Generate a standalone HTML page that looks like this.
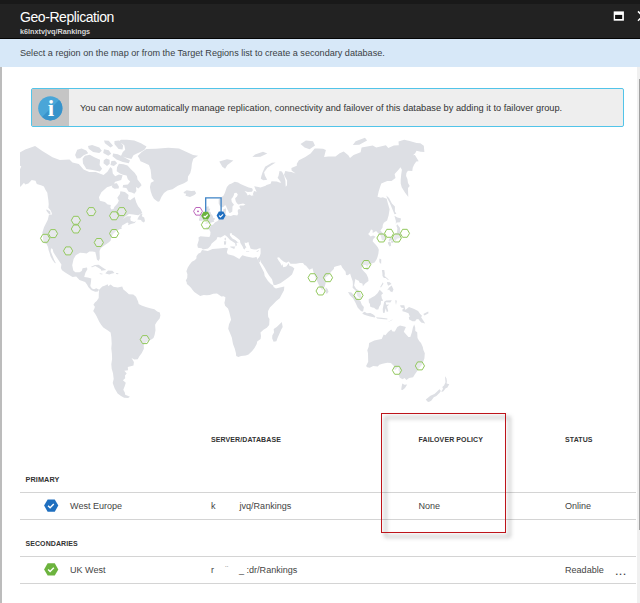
<!DOCTYPE html>
<html><head><meta charset="utf-8"><title>Geo-Replication</title>
<style>
html,body{margin:0;padding:0;}
body{width:640px;height:603px;position:relative;overflow:hidden;background:#fff;font-family:"Liberation Sans",sans-serif;color:#333;}
.abs{position:absolute;}
#topstrip{left:0;top:0;width:640px;height:4px;background:#191919;}
#hdr{left:0;top:4px;width:640px;height:35px;background:#222;}
#hdrline{left:0;top:38px;width:640px;height:1.2px;background:#050505;}
#title{left:20px;top:9.2px;font-size:14px;letter-spacing:-0.43px;color:#fff;white-space:nowrap;line-height:17px;}
#sub{left:20px;top:26.8px;font-size:7.25px;font-weight:bold;color:#d8d8d8;white-space:nowrap;line-height:10px;}
#band{left:0;top:39px;width:640px;height:28px;background:#d7e8f8;}
#bandtxt{left:20px;top:47px;font-size:9.1px;color:#3a3f45;white-space:nowrap;line-height:12px;}
#lborder{left:0;top:67px;width:1.6px;height:536px;background:#bcbcbc;}
#rborder{left:636.5px;top:67px;width:3.5px;height:536px;background:#f0f0f0;}
#thumb{left:638.7px;top:79px;width:1.3px;height:451px;background:#a0a0a0;}
#info{left:31px;top:88.2px;width:591px;height:36.6px;border:1.5px solid #52c4e9;border-radius:2px;background:#eeeeee;}
#infoicon{left:0;top:0;width:37.2px;height:36.6px;background:#c5c5c5;}
#infotxt{left:80px;top:102px;font-size:9.24px;color:#333;white-space:nowrap;line-height:12px;}
.th{font-size:7px;font-weight:bold;color:#333;white-space:nowrap;line-height:9px;letter-spacing:0.1px;}
.td{font-size:9.05px;color:#444;white-space:nowrap;line-height:12px;}
.hl{height:1px;background:#d4d4d4;left:20px;width:615.5px;}
#redbox{left:380.9px;top:413.4px;width:122.7px;height:117.5px;border:1.8px solid #be141a;filter:drop-shadow(4px 4px 2.2px rgba(0,0,0,0.55));}
</style></head><body>
<div class="abs" id="topstrip"></div>
<div class="abs" id="hdr"></div>
<div class="abs" id="hdrline"></div>
<svg class="abs" style="left:610px;top:8px;" width="30" height="16" viewBox="610 8 30 16"><rect x="613.7" y="11.4" width="10.2" height="9.3" fill="#fff"/><rect x="615.1" y="14.9" width="7.1" height="4.1" fill="#111"/><path d="M638,11.4 L642.7,16.1 L638,20.8" fill="none" stroke="#fff" stroke-width="1.5"/></svg>
<div class="abs" id="title">Geo-Replication</div>
<div class="abs" id="sub">k6lnxtvjvq/Rankings</div>
<div class="abs" id="band"></div>
<div class="abs" id="bandtxt">Select a region on the map or from the Target Regions list to create a secondary database.</div>
<div class="abs" id="lborder"></div>
<div class="abs" id="rborder"></div><div class="abs" id="thumb"></div>
<div class="abs" id="info"><div class="abs" id="infoicon"></div></div>
<svg class="abs" style="left:37px;top:95px;" width="27" height="27" viewBox="0 0 27 27"><defs><clipPath id="cc"><circle cx="13.3" cy="13.3" r="12.1"/></clipPath></defs><circle cx="13.3" cy="13.3" r="12.1" fill="#4aa6d8"/><path d="M27,0 L27,27 L0,27 Z" fill="#3893cb" clip-path="url(#cc)"/><text x="14" y="20.6" text-anchor="middle" font-family="Liberation Serif,serif" font-weight="bold" font-size="23" fill="#fff">i</text></svg>
<div class="abs" id="infotxt">You can now automatically manage replication, connectivity and failover of this database by adding it to failover group.</div>
<!--MAP--><svg class="abs" id="map" style="left:20px;top:130px;" width="450" height="290" viewBox="20 130 450 290"><path fill="#dddfe4" d="M14.3,160.4 20.2,152.3 25.2,149.4 35.1,145.9 42.3,151.1 52.5,157.2 59.8,160.1 69.5,159.5 72.5,162.6 78.8,164.1 83.6,169.4 89.2,172.0 95.7,172.1 103.6,174.9 107.4,171.7 110.4,166.9 112.2,168.8 112.8,173.6 115.2,176.3 118.9,174.5 122.6,175.3 121.2,180.0 115.2,181.8 112.4,185.6 107.0,187.2 101.4,192.3 98.9,197.2 99.9,200.8 104.9,202.1 107.7,204.4 110.8,204.9 110.4,207.8 111.5,209.4 113.5,209.1 114.3,206.9 117.5,203.4 118.8,200.7 117.3,197.8 119.9,194.1 120.4,191.3 124.9,192.0 128.6,195.0 128.0,198.8 130.1,200.3 133.9,197.6 134.6,197.1 136.3,202.5 138.1,206.3 140.6,209.3 142.3,213.0 138.1,215.2 133.2,214.5 128.9,214.0 125.4,216.6 122.5,219.4 126.8,216.2 131.2,216.2 130.3,218.6 130.7,220.8 134.2,221.9 136.2,221.1 134.7,222.9 130.9,223.9 128.1,225.2 128.5,223.0 127.2,222.6 124.3,224.3 122.1,225.6 121.3,228.0 122.1,228.6 119.1,229.6 116.0,231.1 113.0,234.0 111.3,237.4 110.6,240.7 108.3,242.7 104.6,245.2 100.9,247.9 99.5,250.9 99.7,255.6 99.8,258.5 98.6,261.0 96.9,259.5 96.2,255.7 95.3,252.0 92.4,251.5 89.4,251.5 86.6,253.6 83.7,253.1 80.0,252.8 75.8,255.3 73.6,259.1 72.2,265.2 73.3,270.5 75.3,272.3 79.6,272.3 81.7,270.9 82.6,268.3 86.9,267.6 87.4,269.3 85.4,272.7 84.2,277.0 87.8,277.4 91.3,278.6 90.8,283.1 90.3,285.9 91.9,288.4 94.0,289.3 96.3,288.3 99.1,289.7 97.8,291.5 95.3,291.8 93.2,290.9 91.0,290.0 88.3,287.1 87.0,284.6 85.1,282.0 82.3,281.1 79.5,280.1 76.2,276.6 72.6,276.9 69.2,275.0 65.2,272.6 62.0,270.2 60.9,268.1 61.4,264.6 59.1,261.1 56.8,257.5 55.1,254.9 53.4,252.3 52.6,249.1 51.0,248.3 50.7,251.3 52.5,255.7 54.2,260.0 55.9,263.2 54.8,263.0 52.5,260.0 50.5,256.2 49.6,253.0 48.7,250.4 47.9,246.8 46.6,244.1 43.8,242.9 43.0,238.7 43.0,236.8 42.4,232.4 44.0,227.3 47.8,219.7 48.9,214.9 51.4,215.0 51.9,213.2 50.7,210.4 48.4,207.8 48.7,204.2 48.4,200.5 47.9,197.2 47.3,192.7 45.3,189.6 43.9,186.6 41.7,185.4 36.8,183.9 35.5,180.7 31.7,179.9 28.4,183.6 25.2,184.4 24.0,182.7 20.7,186.4 16.0,188.9 10.8,190.9 6.1,191.9 9.3,189.7 15.0,186.7 18.0,183.5 14.9,182.8 12.7,181.7 13.7,178.3 11.7,175.3 11.9,172.1 15.3,169.0 20.3,168.7 21.3,166.3 19.0,165.3 15.5,164.0ZM46.5,209.2 50.2,211.5 50.6,215.1 48.9,214.0 46.4,210.8ZM137.3,219.4 138.5,216.9 140.6,214.0 142.5,213.8 141.8,216.2 144.2,217.5 145.0,221.1 143.9,222.4 141.6,221.2 141.1,220.1ZM118.9,163.7 123.4,164.2 127.5,165.6 130.7,169.0 134.6,172.7 137.0,176.3 137.5,179.4 140.5,183.3 141.6,185.3 138.4,188.4 136.0,186.9 136.4,191.1 134.4,193.8 131.8,192.5 128.6,191.7 126.4,188.1 122.6,187.5 123.1,184.9 127.9,184.6 130.2,181.6 127.8,179.3 126.6,175.4 122.9,174.7 120.0,173.5 116.7,171.3 117.0,167.3ZM82.6,158.7 83.0,163.6 86.4,168.9 92.7,169.9 99.9,171.4 102.1,168.8 99.6,165.1 100.1,159.7 94.3,157.2 89.8,154.8 84.9,155.7ZM75.1,155.0 76.7,158.4 80.1,158.3 83.7,155.3 88.2,153.3 86.3,150.4 81.6,148.4 77.2,149.8ZM88.7,148.8 93.1,151.9 99.3,153.0 101.8,150.7 99.3,147.5 92.1,144.9 88.0,145.9ZM103.5,163.3 107.0,165.9 109.7,163.7 109.6,159.8 106.2,158.6 103.8,160.3ZM110.5,164.9 113.9,165.9 117.2,163.2 115.0,160.7 111.4,161.0ZM112.5,156.3 116.5,159.5 122.9,162.1 128.8,163.2 130.0,160.5 124.1,157.3 117.8,154.3 113.1,153.5ZM103.2,152.9 108.3,155.7 111.2,153.7 108.8,150.3 104.0,149.3ZM121.0,156.0 126.3,157.7 131.4,158.9 133.5,155.3 136.9,153.5 140.9,151.8 144.7,149.5 146.5,146.5 141.0,143.2 134.3,140.6 127.0,139.7 121.0,139.8 118.9,141.2 124.3,145.2 125.2,149.8 122.8,151.9ZM114.4,144.0 118.6,149.1 122.5,149.4 123.2,145.4 118.9,140.5 114.5,140.9ZM104.9,143.3 110.5,147.5 113.1,145.7 108.7,140.7 104.0,140.6ZM113.4,183.4 116.9,183.3 118.9,186.6 118.7,188.5 114.5,188.8 111.7,187.1ZM137.7,155.9 141.7,152.0 146.3,149.0 155.8,148.7 168.3,147.8 179.0,148.5 187.7,152.5 193.1,154.9 198.1,155.8 193.3,158.8 191.9,163.6 191.4,168.4 190.3,173.1 188.0,176.4 187.7,181.0 184.0,183.2 177.8,185.8 172.5,189.3 167.4,190.6 164.0,192.9 161.5,196.8 159.5,201.2 158.2,201.8 157.1,201.2 153.9,198.8 152.1,195.6 150.7,191.3 149.9,187.0 150.9,182.7 154.1,180.9 151.4,178.2 151.2,174.7 150.6,169.7 148.9,164.9 144.6,163.0 140.5,161.3 139.2,158.3ZM99.1,289.7 102.3,286.4 104.6,285.8 107.7,284.2 108.2,286.2 110.6,284.5 113.4,286.7 117.7,287.5 122.2,286.6 123.4,289.4 126.2,291.8 128.9,294.3 133.3,294.6 136.0,296.7 138.1,301.5 138.7,303.9 141.6,305.4 145.8,307.0 150.1,308.3 154.4,309.3 157.2,311.6 159.8,312.4 160.4,315.5 159.6,318.6 156.9,321.7 155.1,324.8 155.5,330.2 154.6,334.9 153.5,338.1 150.9,339.8 146.9,341.4 143.7,344.7 143.9,348.7 141.8,352.9 139.4,356.2 137.7,359.2 134.3,359.6 131.5,358.1 133.9,362.0 133.5,365.4 127.8,367.0 128.0,370.3 124.3,370.8 126.7,373.6 125.0,375.4 125.2,378.2 122.9,380.2 125.8,382.8 124.5,386.8 123.3,389.8 124.8,392.5 125.2,394.7 130.0,396.7 128.1,398.1 124.1,397.8 121.0,396.1 117.6,393.4 114.7,388.6 112.7,382.9 113.7,379.0 113.0,373.3 111.7,368.8 111.3,364.3 112.1,358.9 111.9,353.7 111.3,348.5 111.7,343.5 111.3,336.9 110.6,332.5 107.9,330.4 103.3,327.6 101.1,324.7 99.1,321.5 96.6,316.3 95.0,313.4 93.2,311.0 94.5,308.3 94.9,306.8 93.4,304.7 94.9,302.4 96.7,300.9 98.7,297.9 98.8,294.0ZM202.0,249.9 207.8,251.0 212.5,249.0 218.7,248.5 225.7,247.7 228.0,248.2 226.8,252.3 227.8,254.2 233.7,255.8 239.3,258.9 240.8,257.1 242.4,255.2 246.4,256.4 252.8,257.8 256.6,257.1 257.3,259.1 258.8,262.1 261.8,268.1 264.1,272.6 264.7,276.1 268.0,280.9 270.9,283.9 273.3,285.4 273.5,286.9 275.9,288.5 280.0,287.5 284.3,286.5 284.0,290.2 281.7,294.6 279.7,298.3 276.3,301.1 272.7,304.7 269.9,307.5 268.1,311.1 268.0,314.0 268.2,316.9 269.5,319.1 269.2,325.0 266.8,327.8 263.5,329.7 260.5,332.6 261.0,336.0 260.6,339.1 257.2,341.5 256.7,343.9 254.5,348.0 252.2,351.0 248.5,354.4 245.8,355.6 241.1,355.9 238.3,357.0 236.2,355.9 235.9,353.0 234.8,348.8 233.0,343.9 231.8,337.4 229.9,332.7 228.2,328.8 229.0,324.2 231.1,319.7 230.2,316.0 229.1,311.5 228.0,308.6 225.1,305.7 224.4,302.8 225.1,299.9 225.4,297.3 223.6,296.3 221.4,296.5 219.2,295.0 217.0,293.6 213.3,293.8 209.7,295.0 206.7,295.2 203.8,295.0 200.2,296.0 197.2,293.9 194.3,292.1 192.2,289.6 191.2,287.9 189.3,286.1 186.9,283.9 186.7,282.3 185.8,280.5 187.2,277.9 187.4,274.2 186.4,271.2 187.8,267.6 189.5,264.8 191.9,261.7 194.7,260.3 196.4,258.6 196.5,256.3 198.2,253.7 200.7,252.4ZM281.8,321.9 282.7,327.0 281.4,329.2 279.5,333.6 277.5,338.1 276.4,341.2 273.6,341.8 272.2,338.6 272.3,335.6 274.0,332.6 273.7,328.9 276.7,327.1 279.8,324.0ZM197.3,244.9 197.9,247.7 201.6,248.3 202.9,249.5 208.0,248.4 210.4,245.9 211.7,243.4 216.5,239.6 217.5,236.9 220.7,237.5 224.9,235.1 227.1,236.8 230.1,240.1 232.9,241.8 235.1,243.3 235.6,245.9 235.2,246.7 237.1,245.1 236.3,243.8 237.2,242.6 239.0,243.2 235.3,239.9 232.4,238.5 230.0,235.5 229.8,233.4 231.7,232.9 231.9,234.4 233.9,235.6 237.2,237.9 239.9,240.2 240.4,242.9 242.6,246.5 243.6,249.0 244.7,249.5 245.5,247.8 246.5,247.5 245.1,245.3 244.6,242.6 246.1,243.1 248.4,242.0 248.8,243.2 248.9,244.3 249.7,246.0 250.5,248.5 251.7,248.9 254.2,249.4 256.6,249.5 258.2,248.7 260.5,248.0 260.6,251.0 260.6,253.4 259.9,255.8 259.3,257.0 257.5,259.1 258.9,262.1 259.7,262.5 260.4,259.7 260.7,262.0 262.9,265.0 265.2,268.8 266.8,271.8 269.1,275.6 272.0,279.3 273.4,284.2 273.7,285.1 275.8,285.0 280.4,283.2 285.0,280.0 288.8,277.3 292.0,274.6 293.0,271.9 294.4,268.4 292.3,266.7 289.4,265.8 288.8,262.9 287.6,264.7 286.2,266.6 283.2,267.2 282.5,264.0 281.7,265.7 280.4,263.0 278.4,260.2 277.1,257.8 279.0,257.3 281.0,259.5 283.5,261.4 286.3,262.7 288.8,261.6 290.5,263.7 295.9,263.7 299.9,262.9 303.0,263.0 304.5,264.9 306.1,265.8 307.0,266.9 309.4,269.7 312.5,268.3 313.6,272.5 315.3,277.6 317.7,282.6 320.2,287.5 322.2,290.5 323.2,288.9 324.7,286.6 325.5,283.7 325.8,281.1 325.3,277.7 328.2,275.5 331.1,271.8 333.8,269.1 334.2,266.9 336.3,266.2 339.2,265.6 341.0,265.0 342.2,267.6 345.6,271.8 346.0,275.1 347.8,275.3 350.1,273.6 351.2,277.1 352.7,281.2 352.9,284.8 352.6,287.8 355.8,290.7 357.3,296.1 360.6,298.9 361.7,297.0 360.6,293.5 358.7,290.6 356.1,288.8 354.1,285.5 355.0,281.0 355.5,278.7 356.4,279.8 358.7,280.8 359.6,282.8 362.4,283.4 362.9,286.2 365.2,283.5 368.5,280.9 368.2,278.1 366.4,274.0 363.3,270.8 361.5,268.4 362.3,266.4 363.8,265.0 365.8,265.0 367.4,267.0 367.9,265.1 370.9,263.8 374.6,262.4 376.5,259.6 377.5,257.1 378.4,253.4 378.8,249.7 377.9,247.6 376.2,245.3 372.6,241.2 373.3,238.9 375.6,236.7 373.1,235.6 370.7,236.6 368.1,233.9 369.4,232.8 371.0,229.6 372.6,230.0 372.7,233.0 376.1,231.0 378.4,233.4 380.6,235.2 381.9,240.0 383.9,240.7 385.7,239.1 385.0,235.6 382.2,232.5 380.4,230.5 382.5,227.7 382.8,224.9 383.8,222.8 387.1,220.5 388.6,215.5 389.6,209.3 387.9,203.5 386.7,198.7 382.8,197.2 380.9,197.7 377.5,196.8 378.6,191.8 379.9,187.4 381.3,183.4 387.2,180.9 391.5,180.9 395.5,178.1 394.6,173.9 398.1,170.3 400.5,167.2 401.9,169.8 401.2,174.6 400.7,179.7 400.7,183.4 401.7,187.2 405.1,192.8 408.3,197.1 408.1,192.4 408.0,187.9 409.7,186.0 408.0,182.9 407.4,178.9 406.1,175.9 406.4,172.9 407.9,170.8 412.3,170.9 412.7,167.7 414.2,164.6 416.3,161.5 418.7,161.3 414.9,155.1 413.0,155.2 415.2,153.2 416.5,150.8 420.6,151.7 424.4,152.0 423.8,145.7 420.3,143.2 416.6,143.0 409.6,140.9 404.2,139.8 398.5,141.4 398.8,145.2 393.8,145.5 388.3,148.0 385.9,145.2 376.2,147.6 372.7,145.4 361.6,147.6 360.6,152.2 353.6,154.9 350.0,157.9 348.3,155.2 343.7,151.5 339.7,153.3 335.5,156.5 328.4,156.6 324.1,157.1 325.9,150.0 323.0,148.7 318.0,148.5 314.7,148.4 310.6,153.6 305.3,156.9 298.9,160.2 296.8,163.7 296.8,165.7 291.4,167.9 291.6,170.5 295.6,173.6 291.4,171.9 289.0,171.7 285.3,171.1 284.0,174.8 287.1,180.5 287.0,185.3 285.7,186.7 285.4,180.8 284.2,176.0 281.9,171.4 279.5,171.1 278.5,175.9 277.6,177.8 281.3,182.7 279.4,182.4 276.8,181.6 271.5,181.3 270.6,183.8 266.5,185.1 265.6,185.7 260.5,187.4 257.0,186.7 254.2,186.3 256.1,190.7 256.7,191.8 254.0,191.1 252.8,194.2 253.7,195.2 251.2,195.7 249.7,194.4 247.6,195.5 246.8,193.4 244.5,191.0 247.9,191.9 252.0,191.7 252.9,189.9 252.1,188.2 248.7,187.6 243.9,185.5 240.5,184.1 238.1,182.4 234.8,181.8 231.6,183.5 229.1,184.6 226.9,187.0 226.0,189.4 224.8,192.9 223.4,195.7 221.6,197.0 218.7,199.5 218.7,203.4 219.8,205.8 221.6,207.4 223.3,206.9 225.2,205.0 226.2,206.6 227.6,209.7 228.7,211.8 229.1,213.0 230.6,212.7 232.3,211.4 232.4,209.0 232.5,206.6 234.0,204.7 231.8,202.1 231.3,199.1 232.8,197.2 233.8,195.3 234.4,193.0 236.5,192.8 237.8,194.5 237.0,196.4 235.1,198.3 235.7,201.3 236.9,203.3 238.3,204.6 240.6,203.9 243.1,203.6 245.5,204.6 243.6,205.4 240.0,205.5 239.3,206.8 240.8,209.5 238.8,209.0 237.6,210.7 238.2,213.7 237.2,215.5 235.8,215.2 233.4,215.1 230.9,216.0 228.2,215.5 227.0,215.8 225.7,214.8 225.7,213.7 226.0,210.6 225.7,208.2 223.2,209.5 223.3,212.6 224.2,215.8 222.1,216.8 219.5,217.2 218.5,219.9 217.3,221.3 215.1,222.2 212.9,224.8 210.8,224.9 210.3,226.7 205.9,227.1 206.4,228.5 209.1,229.6 210.5,232.0 210.3,234.8 209.4,236.9 206.0,236.7 200.4,236.2 198.5,237.4 198.8,240.1ZM204.8,223.9 207.9,223.5 211.4,222.6 214.7,221.6 213.5,221.0 215.2,218.5 213.3,217.9 212.7,215.8 211.0,213.8 210.4,211.8 209.0,211.8 210.3,208.7 208.4,208.4 209.0,206.5 206.5,206.6 205.2,208.9 205.7,211.9 206.6,213.9 208.7,214.1 208.9,216.3 206.9,217.4 207.2,219.4 205.7,220.5 208.0,221.0 208.7,221.4 206.6,222.1ZM199.2,220.7 201.9,220.7 204.4,219.5 204.9,217.0 205.6,215.0 204.4,213.6 202.0,213.6 199.6,215.6 199.7,217.5 198.9,219.5ZM183.6,192.2 186.6,190.3 191.2,191.0 194.7,190.8 196.2,193.2 194.4,195.1 190.0,196.9 185.4,195.7 186.2,193.8 183.9,193.3ZM219.3,161.5 222.3,166.7 225.1,168.8 227.4,164.9 233.4,160.4 227.0,159.3 222.7,160.5ZM260.8,178.8 263.4,180.3 267.2,179.8 265.0,175.8 264.1,172.2 267.5,167.7 273.3,163.9 275.7,162.5 271.9,162.8 265.1,166.8 262.5,172.4 261.3,176.3ZM304.6,147.6 309.6,149.2 315.0,145.6 313.0,141.2 305.9,140.5 300.5,144.1ZM352.8,145.0 359.3,144.8 367.1,140.6 365.0,137.7 355.6,141.2ZM252.3,156.9 260.4,156.8 267.3,153.6 263.0,151.7 255.0,154.5ZM386.3,195.5 389.0,198.1 391.9,203.6 394.9,206.5 394.9,211.6 396.4,213.7 394.5,214.2 392.6,209.7 389.8,202.9 387.3,198.5ZM395.8,224.4 395.9,221.0 394.4,215.7 397.4,217.6 401.1,218.6 400.1,222.3 396.5,222.5ZM397.2,224.3 400.1,227.9 399.9,231.2 401.3,235.2 400.6,237.4 398.8,238.3 396.8,238.8 395.4,241.3 394.0,239.2 390.9,240.5 388.9,241.1 388.6,240.2 390.0,238.0 394.1,237.2 395.0,233.6 396.9,232.8 397.4,228.5 396.4,225.8ZM387.9,242.2 389.8,241.6 390.9,242.8 391.1,245.8 389.6,246.5 388.0,243.8ZM391.0,241.1 393.6,240.1 393.9,241.9 392.4,243.1 391.2,242.4ZM379.7,258.4 381.3,259.6 381.1,264.0 379.4,262.3 379.3,259.7ZM365.7,267.5 368.4,267.4 368.1,270.2 365.8,269.4ZM325.7,287.3 327.7,289.3 328.5,291.7 327.3,293.4 325.9,293.5 325.4,290.3ZM348.0,292.1 351.4,292.6 356.0,297.0 360.5,301.3 361.8,304.7 363.9,306.9 363.1,311.4 361.2,311.3 357.8,307.8 355.6,303.0 353.2,298.4 349.9,295.2ZM362.2,313.2 364.6,311.8 366.9,313.3 370.3,313.1 372.9,314.3 375.3,316.2 374.8,317.6 370.1,316.6 365.9,315.3 363.8,314.4ZM368.8,298.9 370.2,298.6 372.2,297.3 374.6,296.0 377.5,293.2 379.7,289.8 381.7,291.7 383.1,293.2 381.3,294.9 381.8,298.3 383.2,300.8 381.0,301.0 380.8,304.2 379.2,306.8 378.3,309.5 376.1,309.4 374.0,307.8 372.2,307.6 370.1,306.5 370.0,303.9 368.9,302.4 368.7,300.6ZM382.7,309.0 384.2,301.8 386.1,300.4 391.8,300.3 390.3,302.6 385.7,302.2 386.3,304.7 389.2,304.5 387.0,306.6 388.3,311.3 386.8,312.1 385.7,308.3 384.5,313.0 383.0,312.7ZM400.2,305.2 404.3,305.3 405.4,310.0 409.0,307.0 413.6,308.7 418.1,310.9 420.0,313.7 422.2,315.9 421.0,316.9 425.2,323.5 421.2,322.6 418.2,318.9 416.1,319.6 415.2,321.3 412.5,321.2 409.2,319.6 408.8,317.1 409.9,316.8 408.5,313.3 405.2,312.1 402.5,311.3 402.4,309.4 404.2,308.1 401.5,307.8 400.2,306.1ZM381.9,270.0 384.3,269.9 384.8,273.4 384.6,276.0 388.7,279.5 388.1,280.0 385.7,278.1 383.9,278.0 382.5,275.9 382.4,273.4ZM387.2,290.2 389.1,287.5 391.6,285.5 393.5,289.5 392.3,292.2 390.1,291.2 389.2,289.4ZM387.0,282.1 389.8,282.2 391.5,284.0 389.5,284.9 388.2,285.7 387.3,283.9ZM380.2,287.1 382.9,282.3 383.4,283.8 381.0,287.5ZM375.9,317.2 381.7,317.8 387.4,318.4 387.3,319.5 381.5,319.1 377.2,318.5ZM387.6,322.2 393.1,319.1 391.4,320.6ZM395.4,300.1 396.8,300.7 396.0,305.0 395.5,302.5ZM423.3,313.9 428.2,311.5 428.5,313.2 424.5,315.4ZM369.1,342.9 370.2,342.6 374.3,340.4 377.8,339.8 381.7,339.1 383.7,334.5 385.4,335.2 388.1,332.0 391.2,329.5 392.6,331.4 394.8,331.4 397.3,326.9 400.0,325.4 404.1,326.5 405.9,326.9 403.8,331.7 405.3,333.6 408.4,336.9 410.3,336.9 411.9,332.3 412.9,327.6 414.2,324.4 415.2,327.6 415.3,331.0 417.2,332.3 417.5,338.1 419.2,341.0 421.0,343.0 422.8,347.1 423.4,350.1 424.8,353.3 424.4,358.4 422.1,364.4 418.5,369.3 414.9,374.2 413.1,377.3 409.1,378.0 406.4,380.0 404.6,378.1 402.5,379.2 399.6,377.4 398.8,374.9 399.6,372.2 398.5,370.2 398.7,366.5 395.2,369.9 394.6,369.7 393.7,365.7 390.9,362.9 387.2,362.8 382.5,363.8 379.3,364.8 377.8,366.5 373.2,366.0 369.8,367.7 367.1,367.2 366.1,365.9 368.2,361.7 368.1,357.9 368.0,353.2 367.3,350.3 368.7,346.7ZM402.3,383.5 404.4,384.7 407.2,384.5 405.0,388.0 402.6,390.0 401.2,389.8 401.6,386.8ZM445.2,376.2 446.5,378.5 446.9,381.3 446.6,383.6 449.3,384.3 447.2,387.7 445.9,388.1 443.4,391.2 441.7,392.0 441.5,391.3 443.0,388.7 442.3,386.9 444.0,385.4 445.5,382.2 445.1,377.5ZM439.7,389.2 440.8,391.1 439.7,392.8 436.4,396.0 433.8,397.2 431.2,400.7 428.7,401.9 427.4,401.4 425.8,399.5 430.4,395.7 434.4,393.9 436.9,391.7 438.6,389.9ZM90.7,266.9 94.8,265.0 98.6,264.8 102.6,267.4 105.3,269.2 106.3,270.1 101.3,270.7 100.8,269.2 97.4,267.2 95.3,266.1 92.2,267.2ZM105.6,273.0 108.0,270.6 112.4,270.8 114.5,273.0 111.2,273.7 109.3,274.6 105.5,273.5ZM99.7,273.3 102.6,273.7 102.2,274.4 99.8,274.0ZM116.2,273.1 118.5,273.3 118.1,274.2 116.0,274.1ZM230.2,246.6 235.1,246.4 234.3,248.9 230.4,247.3ZM223.9,241.3 226.2,241.3 226.0,244.5 224.1,244.8ZM224.6,237.9 225.9,237.7 225.8,240.4 224.7,239.9ZM245.9,250.9 249.4,251.3 249.0,251.8 246.0,251.6ZM256.5,251.3 259.1,250.1 258.4,251.3 256.9,251.9Z"/><!--MARKERS--><polygon points="95.80,211.60 93.50,215.58 88.90,215.58 86.60,211.60 88.90,207.62 93.50,207.62" fill="rgba(255,255,255,0.3)" stroke="#92c85d" stroke-width="1"/><polygon points="126.30,211.60 124.00,215.58 119.40,215.58 117.10,211.60 119.40,207.62 124.00,207.62" fill="rgba(255,255,255,0.3)" stroke="#92c85d" stroke-width="1"/><polygon points="118.70,215.80 116.40,219.78 111.80,219.78 109.50,215.80 111.80,211.82 116.40,211.82" fill="rgba(255,255,255,0.3)" stroke="#92c85d" stroke-width="1"/><polygon points="80.50,220.30 78.20,224.28 73.60,224.28 71.30,220.30 73.60,216.32 78.20,216.32" fill="rgba(255,255,255,0.3)" stroke="#92c85d" stroke-width="1"/><polygon points="80.50,229.00 78.20,232.98 73.60,232.98 71.30,229.00 73.60,225.02 78.20,225.02" fill="rgba(255,255,255,0.3)" stroke="#92c85d" stroke-width="1"/><polygon points="57.60,233.60 55.30,237.58 50.70,237.58 48.40,233.60 50.70,229.62 55.30,229.62" fill="rgba(255,255,255,0.3)" stroke="#92c85d" stroke-width="1"/><polygon points="49.70,238.30 47.40,242.28 42.80,242.28 40.50,238.30 42.80,234.32 47.40,234.32" fill="rgba(255,255,255,0.3)" stroke="#92c85d" stroke-width="1"/><polygon points="118.70,233.50 116.40,237.48 111.80,237.48 109.50,233.50 111.80,229.52 116.40,229.52" fill="rgba(255,255,255,0.3)" stroke="#92c85d" stroke-width="1"/><polygon points="103.40,242.50 101.10,246.48 96.50,246.48 94.20,242.50 96.50,238.52 101.10,238.52" fill="rgba(255,255,255,0.3)" stroke="#92c85d" stroke-width="1"/><polygon points="72.70,250.90 70.40,254.88 65.80,254.88 63.50,250.90 65.80,246.92 70.40,246.92" fill="rgba(255,255,255,0.3)" stroke="#92c85d" stroke-width="1"/><polygon points="149.40,339.60 147.10,343.58 142.50,343.58 140.20,339.60 142.50,335.62 147.10,335.62" fill="rgba(255,255,255,0.3)" stroke="#92c85d" stroke-width="1"/><polygon points="210.50,224.80 208.20,228.78 203.60,228.78 201.30,224.80 203.60,220.82 208.20,220.82" fill="rgba(255,255,255,0.3)" stroke="#92c85d" stroke-width="1"/><polygon points="317.20,277.70 314.90,281.68 310.30,281.68 308.00,277.70 310.30,273.72 314.90,273.72" fill="rgba(255,255,255,0.3)" stroke="#92c85d" stroke-width="1"/><polygon points="332.60,277.70 330.30,281.68 325.70,281.68 323.40,277.70 325.70,273.72 330.30,273.72" fill="rgba(255,255,255,0.3)" stroke="#92c85d" stroke-width="1"/><polygon points="325.20,291.00 322.90,294.98 318.30,294.98 316.00,291.00 318.30,287.02 322.90,287.02" fill="rgba(255,255,255,0.3)" stroke="#92c85d" stroke-width="1"/><polygon points="363.10,295.40 360.80,299.38 356.20,299.38 353.90,295.40 356.20,291.42 360.80,291.42" fill="rgba(255,255,255,0.3)" stroke="#92c85d" stroke-width="1"/><polygon points="370.80,264.50 368.50,268.48 363.90,268.48 361.60,264.50 363.90,260.52 368.50,260.52" fill="rgba(255,255,255,0.3)" stroke="#92c85d" stroke-width="1"/><polygon points="386.10,238.00 383.80,241.98 379.20,241.98 376.90,238.00 379.20,234.02 383.80,234.02" fill="rgba(255,255,255,0.3)" stroke="#92c85d" stroke-width="1"/><polygon points="393.70,233.30 391.40,237.28 386.80,237.28 384.50,233.30 386.80,229.32 391.40,229.32" fill="rgba(255,255,255,0.3)" stroke="#92c85d" stroke-width="1"/><polygon points="401.40,238.00 399.10,241.98 394.50,241.98 392.20,238.00 394.50,234.02 399.10,234.02" fill="rgba(255,255,255,0.3)" stroke="#92c85d" stroke-width="1"/><polygon points="409.50,233.30 407.20,237.28 402.60,237.28 400.30,233.30 402.60,229.32 407.20,229.32" fill="rgba(255,255,255,0.3)" stroke="#92c85d" stroke-width="1"/><polygon points="401.60,370.30 399.30,374.28 394.70,374.28 392.40,370.30 394.70,366.32 399.30,366.32" fill="rgba(255,255,255,0.3)" stroke="#92c85d" stroke-width="1"/><polygon points="424.50,365.90 422.20,369.88 417.60,369.88 415.30,365.90 417.60,361.92 422.20,361.92" fill="rgba(255,255,255,0.3)" stroke="#92c85d" stroke-width="1"/><path d="M205.7,213 V197.9 H221.1 V213" fill="none" stroke="#3c82c6" stroke-width="1.3"/><polygon points="202.40,211.30 200.20,215.11 195.80,215.11 193.60,211.30 195.80,207.49 200.20,207.49" fill="#fff" stroke="#b455b4" stroke-width="0.9"/><circle cx="198" cy="211.3" r="0.9" fill="#b455b4"/><polygon points="210.20,215.70 207.95,219.60 203.45,219.60 201.20,215.70 203.45,211.80 207.95,211.80" fill="#6cb33e"/><path d="M203.7,215.8 l1.4,1.4 l2.6,-2.7" fill="none" stroke="#fff" stroke-width="1.1"/><polygon points="225.60,215.50 223.35,219.40 218.85,219.40 216.60,215.50 218.85,211.60 223.35,211.60" fill="#1e6ec0"/><path d="M219.1,215.6 l1.4,1.4 l2.6,-2.7" fill="none" stroke="#fff" stroke-width="1.1"/><!--/MARKERS--></svg><!--/MAP-->
<div class="abs th" style="left:211px;top:435px;">SERVER/DATABASE</div>
<div class="abs th" style="left:418.5px;top:435px;">FAILOVER POLICY</div>
<div class="abs th" style="left:565px;top:435px;">STATUS</div>
<div class="abs th" style="left:25.6px;top:475.4px;font-size:7.25px;">PRIMARY</div>
<div class="abs hl" style="top:492px;"></div>
<div class="abs td" style="left:70px;top:500px;">West Europe</div>
<div class="abs td" style="left:211px;top:500px;">k</div>
<div class="abs td" style="left:239.5px;top:500px;">jvq/Rankings</div>
<div class="abs td" style="left:418.5px;top:500px;">None</div>
<div class="abs td" style="left:565px;top:500px;">Online</div>
<div class="abs hl" style="top:519px;"></div>
<div class="abs th" style="left:25.4px;top:539.4px;">SECONDARIES</div>
<div class="abs hl" style="top:556px;"></div>
<div class="abs td" style="left:70px;top:564px;">UK West</div>
<div class="abs td" style="left:211px;top:564px;">r</div>
<div class="abs td" style="left:225.3px;top:562.5px;color:#aaa;letter-spacing:0.5px;">¨</div>
<div class="abs td" style="left:239px;top:564px;">_ :dr/Rankings</div>
<div class="abs td" style="left:565px;top:564px;">Readable</div>
<div class="abs td" style="left:615.5px;top:566px;font-weight:bold;letter-spacing:1.3px;">...</div>
<div class="abs hl" style="top:583px;"></div>
<svg class="abs" style="left:40px;top:495px;" width="24" height="85" viewBox="40 495 24 85"><polygon points="58.30,505.60 54.75,511.75 47.65,511.75 44.10,505.60 47.65,499.45 54.75,499.45" fill="#1f6fbf"/><path d="M48.1,505.8 l2,2 l3.7,-3.9" fill="none" stroke="#fff" stroke-width="1.4"/><polygon points="58.30,569.40 54.75,575.55 47.65,575.55 44.10,569.40 47.65,563.25 54.75,563.25" fill="#6cb33e"/><path d="M48.1,569.6 l2,2 l3.7,-3.9" fill="none" stroke="#fff" stroke-width="1.4"/></svg>
<div class="abs" id="redbox"></div>
<!--TABLE-->
</body></html>
